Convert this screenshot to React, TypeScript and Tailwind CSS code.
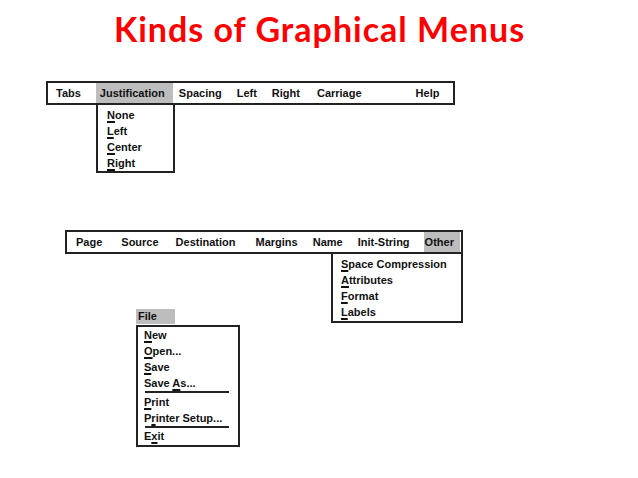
import type {ReactNode} from "react";

const menuFont = {fontFamily: '"Liberation Sans", Arial, sans-serif'};

// first letter(s) shown underlined as the keyboard shortcut
const Key = ({children}: {children: ReactNode}) => (
  <span className="underline decoration-[1.5px] underline-offset-[2px]">
    {children}
  </span>
);

const Item = ({children, className = ""}: {children: ReactNode; className?: string}) => (
  <div className={`h-[16px] leading-[16px] whitespace-nowrap ${className}`}>
    {children}
  </div>
);

export default function App() {
  return (
    <div className="w-[638px] h-[478px] bg-white overflow-hidden">
      {/* Slide title */}
      <h1
        className="pt-[10px] pl-[1px] text-center text-[34px] leading-[38px] font-bold tracking-[1px] text-[#ff0000]"
        style={{fontFamily: 'Lato, "Noto Sans", sans-serif'}}
      >
        Kinds of Graphical Menus
      </h1>

      <div className="text-[11px] font-bold text-[#111]" style={menuFont}>
        {/* Menu bar 1 */}
        <div className="relative mt-[33px] ml-[46px] w-[409px] h-[24px] border-2 border-[#222] flex items-stretch">
          <span className="ml-[8px] flex items-center">Tabs</span>
          <span className="ml-[15px] w-[77px] pl-[4px] bg-[#bdbdbd] flex items-center">
            Justification
          </span>
          <span className="ml-[6px] flex items-center">Spacing</span>
          <span className="ml-[15px] flex items-center">Left</span>
          <span className="ml-[15px] flex items-center">Right</span>
          <span className="ml-[17px] flex items-center">Carriage</span>
          <span className="ml-[54px] flex items-center">Help</span>

          <div className="absolute left-[48px] top-[22px] w-[79px] h-[68px] bg-white border-2 border-t-0 border-[#222] pt-[2px] pl-[9px]">
            <Item><Key>N</Key>one</Item>
            <Item><Key>L</Key>eft</Item>
            <Item><Key>C</Key>enter</Item>
            <Item><Key>R</Key>ight</Item>
          </div>
        </div>

        {/* Menu bar 2 */}
        <div className="relative mt-[125px] ml-[65px] w-[398px] h-[24px] border-2 border-[#222] flex items-stretch">
          <span className="ml-[9px] flex items-center">Page</span>
          <span className="ml-[19px] flex items-center">Source</span>
          <span className="ml-[17px] flex items-center">Destination</span>
          <span className="ml-[20px] flex items-center">Margins</span>
          <span className="ml-[15px] flex items-center">Name</span>
          <span className="ml-[15px] flex items-center">Init-String</span>
          <span className="ml-[14px] w-[36px] pl-[1px] bg-[#bdbdbd] flex items-center">
            Other
          </span>

          <div className="absolute left-[264px] top-[22px] w-[132px] h-[69px] bg-white border-2 border-t-0 border-[#222] pt-[2px] pl-[8px]">
            <Item><Key>S</Key>pace Compression</Item>
            <Item><Key>A</Key>ttributes</Item>
            <Item><Key>F</Key>ormat</Item>
            <Item><Key>L</Key>abels</Item>
          </div>
        </div>

        {/* File menu */}
        <div className="mt-[55px] ml-[136px]">
          <div className="w-[39px] h-[15px] leading-[15px] pl-[2px] bg-[#bdbdbd]">File</div>
          <div className="mt-[1px] w-[104px] h-[122px] border-2 border-[#222] pl-[6px]">
            <Item><Key>N</Key>ew</Item>
            <Item><Key>O</Key>pen...</Item>
            <Item><Key>S</Key>ave</Item>
            <Item>Save <Key>A</Key>s...</Item>
            <div className="ml-[1px] w-[84px] h-[2px] bg-[#222] mb-[1px]" />
            <Item><Key>P</Key>rint</Item>
            <Item>P<Key>r</Key>inter Setup...</Item>
            <div className="ml-[1px] w-[84px] h-[2px] bg-[#222]" />
            <Item>E<Key>x</Key>it</Item>
          </div>
        </div>
      </div>
    </div>
  );
}
